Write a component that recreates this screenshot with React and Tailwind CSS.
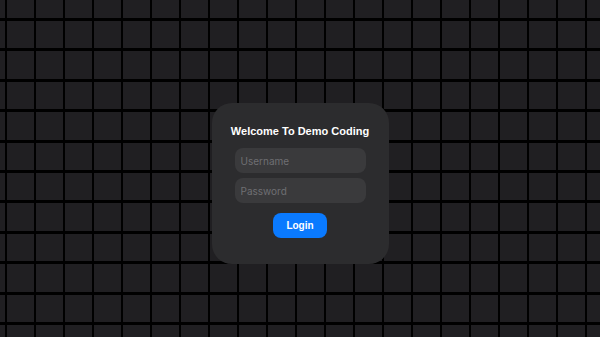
import React from "react";

const cells = Array.from({ length: 22 * 12 });

const App = () => {
  return (
    <div className="relative h-screen w-full overflow-hidden bg-black">
      {/* background tiles */}
      <div className="absolute inset-0">
        <div className="grid grid-cols-[repeat(22,27px)] auto-rows-[27.4px] gap-x-[2px] gap-y-[3px] -ml-[22px] -mt-[9.4px]">
          {cells.map((_, i) => (
            <div key={i} className="bg-[#201f22]" />
          ))}
        </div>
      </div>

      <div className="relative flex h-full items-center justify-center pt-[30px]">
        <div className="flex w-[177px] flex-col items-center rounded-[20px] bg-[#2c2c2e] px-[23px] pt-[20px] pb-[26px]">
          <h2 className="h-[16px] whitespace-nowrap text-[11px] leading-[16px] font-bold text-white font-['Liberation_Sans',Arial,sans-serif]">
            Welcome To Demo Coding
          </h2>
          <input
            type="text"
            placeholder="Username"
            className="mt-[9px] h-[25px] w-full rounded-[8px] bg-[#3a3a3c] px-[6px] text-[10px] text-white placeholder-[#6f6f73] outline-none font-['Inter',sans-serif]"
          />
          <input
            type="password"
            placeholder="Password"
            className="mt-[5px] h-[25px] w-full rounded-[8px] bg-[#3a3a3c] px-[6px] text-[10px] text-white placeholder-[#6f6f73] outline-none font-['Inter',sans-serif]"
          />
          <button className="mt-[10px] h-[25px] w-[54px] rounded-[8px] bg-[#0a7aff] text-[10px] font-bold text-white font-['Liberation_Sans',Arial,sans-serif]">
            Login
          </button>
        </div>
      </div>
    </div>
  );
};

export default App;
